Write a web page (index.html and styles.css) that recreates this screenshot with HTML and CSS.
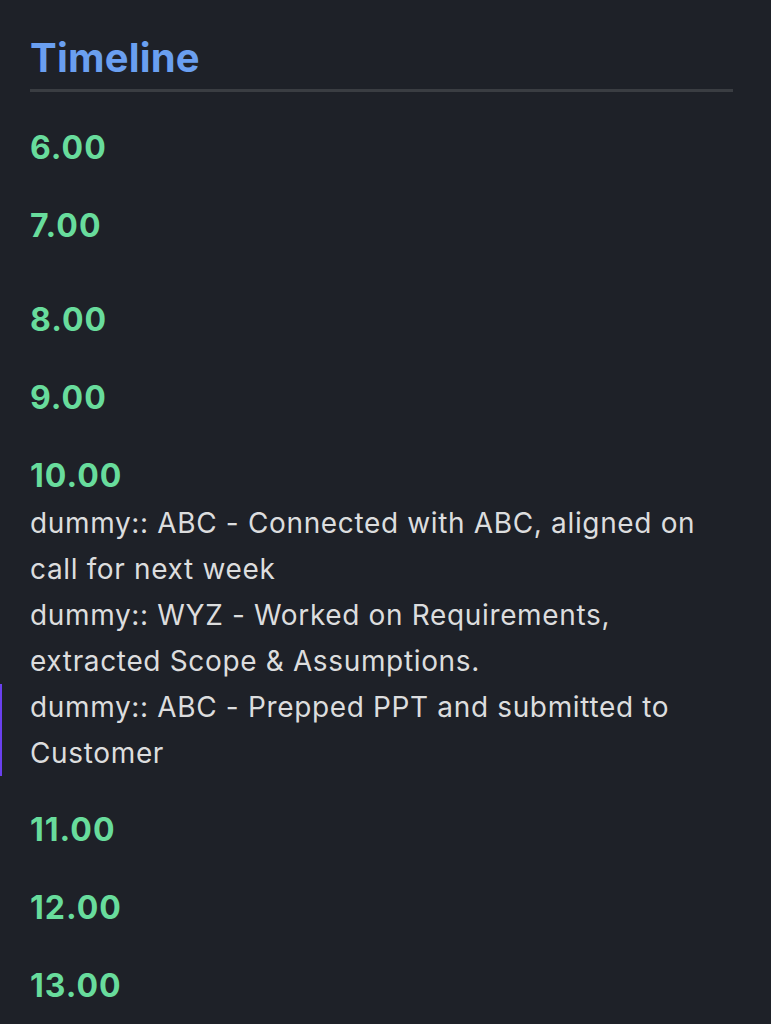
FILE: index.html
```html
<!DOCTYPE html>
<html lang="en">
<head>
    <meta charset="UTF-8">
    <meta name="viewport" content="width=device-width, initial-scale=1.0">
    <title>Timeline</title>
    <link rel="stylesheet" href="styles.css">
</head>
<body>
    <div class="page">
        <h1 class="page-title">Timeline</h1>

        <div class="timeline">
            <div class="slot">
                <h3 class="slot-time">6.00</h3>
            </div>
            <div class="slot">
                <h3 class="slot-time">7.00</h3>
            </div>
            <div class="slot slot-spaced">
                <h3 class="slot-time">8.00</h3>
            </div>
            <div class="slot">
                <h3 class="slot-time">9.00</h3>
            </div>
            <div class="slot">
                <h3 class="slot-time">10.00</h3>
                <p class="note">dummy:: ABC - Connected with ABC, aligned on call for next week</p>
                <p class="note">dummy:: WYZ - Worked on Requirements, extracted Scope &amp; Assumptions.</p>
                <p class="note active">dummy:: ABC - Prepped PPT and submitted to Customer</p>
            </div>
            <div class="slot">
                <h3 class="slot-time">11.00</h3>
            </div>
            <div class="slot">
                <h3 class="slot-time">12.00</h3>
            </div>
            <div class="slot">
                <h3 class="slot-time">13.00</h3>
            </div>
        </div>
    </div>
</body>
</html>
```

FILE: styles.css
```css
html, body {
    margin: 0;
    padding: 0;
    background-color: #1e2128;
}

body {
    font-family: Inter, "Noto Sans", sans-serif;
    color: #dcddde;
}

.page {
    padding: 34px 38px 0 30px;
}

.page-title {
    margin: 0;
    padding-bottom: 7px;
    font-size: 40px;
    line-height: 48px;
    font-weight: 700;
    letter-spacing: 0.2px;
    color: #6a9ff0;
    border-bottom: 3px solid #3a3d42;
}

.timeline {
    display: flex;
    flex-direction: column;
    gap: 30px;
    margin-top: 32px;
}

.slot-spaced {
    margin-top: 16px;
}

.slot-time {
    margin: 0;
    font-size: 32px;
    line-height: 48px;
    font-weight: 700;
    letter-spacing: 1px;
    color: #68dc9c;
}

.note {
    position: relative;
    margin: 0;
    font-size: 28px;
    line-height: 46px;
    letter-spacing: 0.65px;
}

/* active line marker in the left gutter */
.note.active::before {
    content: "";
    position: absolute;
    left: -30px;
    top: 0;
    bottom: 0;
    width: 2px;
    background-color: #6a40ee;
}
```
